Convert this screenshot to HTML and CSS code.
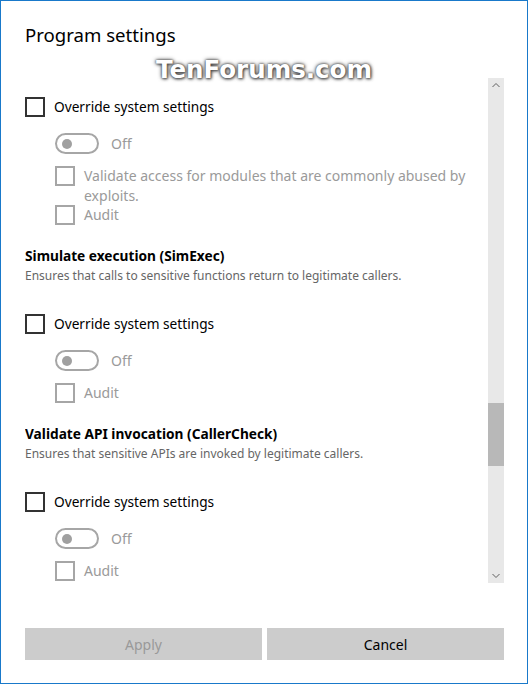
FILE: index.html
```html
<!DOCTYPE html>
<html lang="en">
<head>
    <meta charset="UTF-8">
    <title>Program settings</title>
    <link rel="stylesheet" href="styles.css">
</head>
<body>

<div class="window">
    <h1 class="title">Program settings</h1>
    <div class="watermark">TenForums.com</div>

    <div class="scroll">
        <div class="content">
            <label class="check">
                <span class="box"></span>
                <span>Override system settings</span>
            </label>
            <div class="sub">
                <div class="toggle-row">
                    <span class="toggle"><span class="dot"></span></span>
                    <span class="toggle-label">Off</span>
                </div>
                <label class="check disabled first">
                    <span class="box"></span>
                    <span class="multi">Validate access for modules that are commonly abused by exploits.</span>
                </label>
                <label class="check disabled">
                    <span class="box"></span>
                    <span>Audit</span>
                </label>
            </div>

            <h3 class="heading">Simulate execution (SimExec)</h3>
            <p class="desc">Ensures that calls to sensitive functions return to legitimate callers.</p>
            <label class="check spaced">
                <span class="box"></span>
                <span>Override system settings</span>
            </label>
            <div class="sub">
                <div class="toggle-row">
                    <span class="toggle"><span class="dot"></span></span>
                    <span class="toggle-label">Off</span>
                </div>
                <label class="check disabled first">
                    <span class="box"></span>
                    <span>Audit</span>
                </label>
            </div>

            <h3 class="heading">Validate API invocation (CallerCheck)</h3>
            <p class="desc">Ensures that sensitive APIs are invoked by legitimate callers.</p>
            <label class="check spaced">
                <span class="box"></span>
                <span>Override system settings</span>
            </label>
            <div class="sub">
                <div class="toggle-row">
                    <span class="toggle"><span class="dot"></span></span>
                    <span class="toggle-label">Off</span>
                </div>
                <label class="check disabled first">
                    <span class="box"></span>
                    <span>Audit</span>
                </label>
            </div>
        </div>

        <div class="scrollbar">
            <svg class="arrow" width="16" height="14" viewBox="0 0 16 14">
                <path d="M4.5 9 L8 5.5 L11.5 9" fill="none" stroke="#606060" stroke-width="1"/>
            </svg>
            <div class="track">
                <div class="thumb"></div>
            </div>
            <svg class="arrow" width="16" height="14" viewBox="0 0 16 14">
                <path d="M4.5 5 L8 8.5 L11.5 5" fill="none" stroke="#606060" stroke-width="1"/>
            </svg>
        </div>
    </div>

    <div class="buttons">
        <button class="btn disabled">Apply</button>
        <button class="btn">Cancel</button>
    </div>
</div>

</body>
</html>
```

FILE: styles.css
```css
* {
    margin: 0;
    padding: 0;
    box-sizing: border-box;
    font-family: "Noto Sans", "Open Sans", sans-serif;
}

body {
    background: #fff;
}

.window {
    width: 528px;
    height: 684px;
    border: 1px solid #1979ca;
    background: #fff;
    padding: 0 0 0 24px;
}

.title {
    font-size: 18.6px;
    font-weight: normal;
    color: #000;
    line-height: 28px;
    padding-top: 20px;
}

/* forum watermark stamped over the dialog */
.watermark {
    margin-left: -24px;
    margin-top: 7px;
    text-align: center;
    font-family: "DejaVu Sans", sans-serif;
    font-weight: bold;
    font-size: 24.5px;
    line-height: 28px;
    color: #fff;
    text-shadow: 0 0 4px #444, 0 0 2px #666, 1px 1px 3px #555;
    height: 22px;
}

.scroll {
    display: flex;
    height: 505px;
    overflow: hidden;
}

.content {
    flex: 1;
    padding-top: 19px;
}

.check {
    display: flex;
    align-items: flex-start;
    font-size: 13.7px;
    line-height: 20px;
    color: #000;
}

.check .box {
    flex: none;
    width: 20px;
    height: 20px;
    border: 2px solid #333;
    margin-right: 9px;
}

.check.disabled {
    font-size: 14px;
    color: #9a9a9a;
}

.check.disabled .box {
    border-color: #a6a6a6;
}

.check .multi {
    line-height: 19.5px;
    padding-right: 20px;
}

.check.first {
    margin-top: 12px;
}

.check.spaced {
    margin-top: 30px;
}

.sub {
    padding-left: 30px;
    margin-top: 16px;
}

.toggle-row {
    display: flex;
    align-items: center;
    height: 21px;
}

.toggle {
    width: 44px;
    height: 21px;
    border: 2px solid #a6a6a6;
    border-radius: 11px;
    display: flex;
    align-items: center;
    padding-left: 5px;
    margin-right: 12px;
}

.toggle .dot {
    width: 10px;
    height: 10px;
    border-radius: 50%;
    background: #a0a0a0;
}

.toggle-label {
    font-size: 14px;
    color: #9a9a9a;
}

.heading {
    margin-top: 21px;
    font-size: 13.7px;
    font-weight: bold;
    line-height: 20px;
    color: #000;
}

.desc {
    font-size: 12px;
    line-height: 16px;
    color: #666;
    margin-top: 2px;
}

.scrollbar {
    width: 16px;
    margin-right: 23px;
    background: #e8e8e8;
    display: flex;
    flex-direction: column;
}

.arrow {
    display: block;
    flex: none;
}

.track {
    flex: 1;
}

.thumb {
    margin-top: 311px;
    height: 63px;
    background: #b8b8b8;
}

.buttons {
    display: flex;
    gap: 5px;
    margin-top: 45px;
    padding-right: 23px;
}

.btn {
    flex: 1;
    height: 32px;
    border: none;
    background: #cccccc;
    font-size: 14px;
    color: #000;
}

.btn.disabled {
    color: #999;
}
```
